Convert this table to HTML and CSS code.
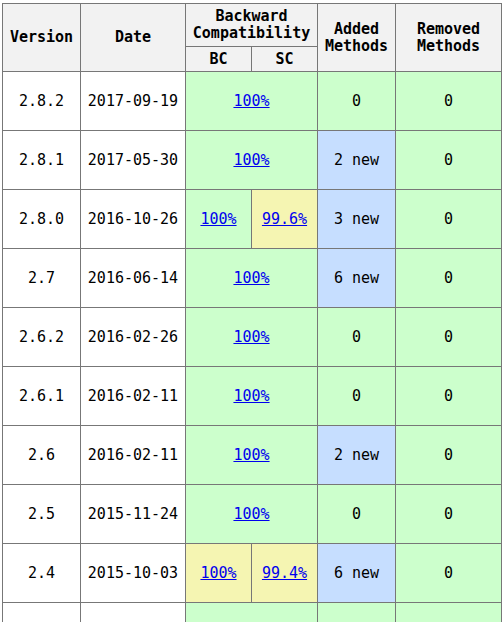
FILE: index.html
```html
<!DOCTYPE html>
<html>
<head>
<meta charset="utf-8">
<link rel="stylesheet" href="styles.css">
</head>
<body>
<table class="summary">
  <colgroup>
    <col class="c-ver"><col class="c-date"><col class="c-bc"><col class="c-sc"><col class="c-add"><col class="c-rem">
  </colgroup>
  <thead>
    <tr class="h1">
      <th rowspan="2">Version</th>
      <th rowspan="2">Date</th>
      <th colspan="2">Backward<br>Compatibility</th>
      <th rowspan="2">Added<br>Methods</th>
      <th rowspan="2">Removed<br>Methods</th>
    </tr>
    <tr class="h2">
      <th>BC</th>
      <th>SC</th>
    </tr>
  </thead>
  <tbody>
    <tr><td>2.8.2</td><td>2017-09-19</td><td colspan="2" class="ok"><a href="#">100%</a></td><td class="ok">0</td><td class="ok">0</td></tr>
    <tr><td>2.8.1</td><td>2017-05-30</td><td colspan="2" class="ok"><a href="#">100%</a></td><td class="new">2 new</td><td class="ok">0</td></tr>
    <tr><td>2.8.0</td><td>2016-10-26</td><td class="ok"><a href="#">100%</a></td><td class="warn"><a href="#">99.6%</a></td><td class="new">3 new</td><td class="ok">0</td></tr>
    <tr><td>2.7</td><td>2016-06-14</td><td colspan="2" class="ok"><a href="#">100%</a></td><td class="new">6 new</td><td class="ok">0</td></tr>
    <tr><td>2.6.2</td><td>2016-02-26</td><td colspan="2" class="ok"><a href="#">100%</a></td><td class="ok">0</td><td class="ok">0</td></tr>
    <tr><td>2.6.1</td><td>2016-02-11</td><td colspan="2" class="ok"><a href="#">100%</a></td><td class="ok">0</td><td class="ok">0</td></tr>
    <tr><td>2.6</td><td>2016-02-11</td><td colspan="2" class="ok"><a href="#">100%</a></td><td class="new">2 new</td><td class="ok">0</td></tr>
    <tr><td>2.5</td><td>2015-11-24</td><td colspan="2" class="ok"><a href="#">100%</a></td><td class="ok">0</td><td class="ok">0</td></tr>
    <tr><td>2.4</td><td>2015-10-03</td><td class="warn"><a href="#">100%</a></td><td class="warn"><a href="#">99.4%</a></td><td class="new">6 new</td><td class="ok">0</td></tr>
    <tr class="partial"><td></td><td></td><td colspan="2" class="ok"></td><td class="ok"></td><td class="ok"></td></tr>
  </tbody>
</table>
</body>
</html>
```
FILE: styles.css
```css
html, body {
  margin: 0;
  padding: 0;
  background: #ffffff;
}
body {
  padding: 3px 2px 0 2px;
  font-family: "DejaVu Sans Mono", monospace;
  font-size: 15px;
  color: #000000;
}
.summary {
  border-collapse: collapse;
  table-layout: fixed;
  width: 499px;
  border: 1px solid #777777;
}
.c-ver { width: 78px; }
.c-date { width: 105px; }
.c-bc { width: 66px; }
.c-sc { width: 66px; }
.c-add { width: 78px; }
.c-rem { width: 106px; }
.summary th, .summary td {
  border: 1px solid #777777;
  text-align: center;
  vertical-align: middle;
  padding: 0;
  line-height: 17px;
}
.summary th {
  background: #f2f2f2;
  font-weight: bold;
}
.h1 { height: 43px; }
.h2 { height: 25px; }
.summary tbody tr { height: 59px; }
.ok { background: #ccffcc; }
.new { background: #c6deff; }
.warn { background: #f5f5b2; }
.summary a {
  color: #0000ee;
  text-decoration: underline;
}
```
